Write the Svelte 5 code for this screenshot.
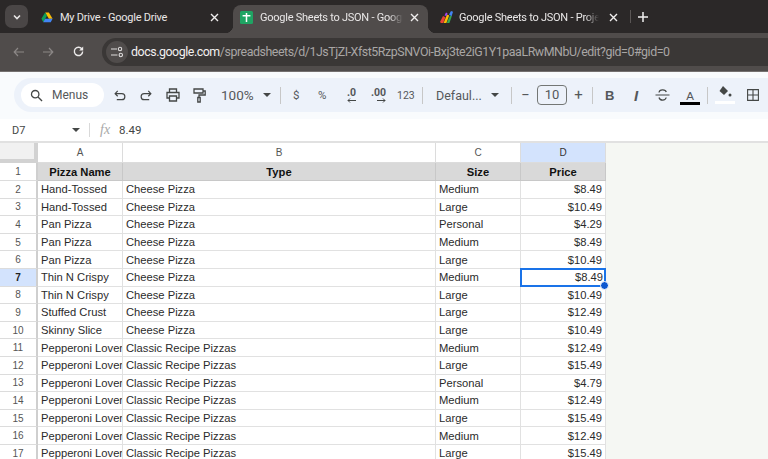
<script>
  const tabs = [
    { id: 'drive', title: 'My Drive - Google Drive' },
    { id: 'sheets', title: 'Google Sheets to JSON - Google Sheets', active: true },
    { id: 'script', title: 'Google Sheets to JSON - Project Editor' },
  ]

  const cheese = 'Cheese Pizza'
  const classic = 'Classic Recipe Pizzas'
  const pep = 'Pepperoni Lovers'
  const rows = [
    ['Hand-Tossed', cheese, 'Medium', '$8.49'],
    ['Hand-Tossed', cheese, 'Large', '$10.49'],
    ['Pan Pizza', cheese, 'Personal', '$4.29'],
    ['Pan Pizza', cheese, 'Medium', '$8.49'],
    ['Pan Pizza', cheese, 'Large', '$10.49'],
    ['Thin N Crispy', cheese, 'Medium', '$8.49'],
    ['Thin N Crispy', cheese, 'Large', '$10.49'],
    ['Stuffed Crust', cheese, 'Large', '$12.49'],
    ['Skinny Slice', cheese, 'Large', '$10.49'],
    [pep, classic, 'Medium', '$12.49'],
    [pep, classic, 'Large', '$15.49'],
    [pep, classic, 'Personal', '$4.79'],
    [pep, classic, 'Medium', '$12.49'],
    [pep, classic, 'Large', '$15.49'],
    [pep, classic, 'Medium', '$12.49'],
    [pep, classic, 'Large', '$15.49'],
  ]
</script>

<div class="page">
  <header class="tabstrip">
    <button class="tab-search" aria-label="Search tabs">
      <svg width="10" height="10" viewBox="0 0 10 10"><path d="M2 3.5 5 6.5 8 3.5" fill="none" stroke="#e8e6e6" stroke-width="1.6"/></svg>
    </button>
    {#each tabs as tab}
      <div class="tab {tab.id}" class:active={tab.active}>
        {#if tab.id === 'drive'}
          <svg class="fav" width="12" height="11" viewBox="0 0 14 13">
            <path d="M4.8.5h4.4l4.4 7.6H9.2z" fill="#fbbc04"/>
            <path d="M4.8.5 7 4.3 2.6 12 .4 8.1z" fill="#0f9d58"/>
            <path d="M4.8 8.1h8.8L11.4 12H2.6z" fill="#4285f4"/>
          </svg>
        {:else if tab.id === 'sheets'}
          <svg class="fav" width="13" height="13" viewBox="0 0 13 13">
            <rect width="13" height="13" rx="1.5" fill="#1fa463"/>
            <path d="M2.6 4.8h7.8M6.5 2v9" stroke="#fff" stroke-width="1.5" fill="none"/>
          </svg>
        {:else}
          <svg class="fav" width="14" height="14" viewBox="0 0 14 14">
            <path d="M0 12 3 6l2.4 1.2L3.2 13H1z" fill="#ea4335"/>
            <path d="M3.6 13 7 4.4l2.2 1L6.4 13z" fill="#fbbc04"/>
            <path d="M6.8 13 10 5.5l1.8.8L9.4 13z" fill="#34a853"/>
            <path d="M9 4.5 11 1l2 .8-1.4 4.4z" fill="#4285f4"/>
            <path d="M4.5 5.5 6 2.5l1.5.8-1 2.6z" fill="#a142f4"/>
          </svg>
        {/if}
        <span class="tab-title">{tab.title}</span>
        <svg class="tab-x" width="9" height="9" viewBox="0 0 9 9"><path d="M1 1l7 7M8 1 1 8" stroke="#f1efef" stroke-width="1.4"/></svg>
      </div>
    {/each}
    <span class="tab-sep"></span>
    <svg class="new-tab" width="10" height="10" viewBox="0 0 10 10"><path d="M5 0v10M0 5h10" stroke="#f1efef" stroke-width="1.5"/></svg>
  </header>

  <div class="addressbar">
    <svg width="11" height="10" viewBox="0 0 11 10" class="nav"><path d="M11 5H1.2M5 1 1.2 5 5 9" fill="none" stroke="#8b8786" stroke-width="1.2"/></svg>
    <svg width="11" height="10" viewBox="0 0 11 10" class="nav"><path d="M0 5h9.8M6 1l3.8 4L6 9" fill="none" stroke="#8b8786" stroke-width="1.2"/></svg>
    <svg width="11" height="11" viewBox="0 0 14 14" class="nav reload"><path d="M11.6 4.2A5.3 5.3 0 1 0 12.3 7" fill="none" stroke="#eceaea" stroke-width="1.8"/><path d="M13 .6v5.2H7.8z" fill="#eceaea"/></svg>
    <div class="omnibox">
      <span class="site-btn">
        <svg width="12" height="12" viewBox="0 0 12 12"><path d="M0 3h6M0 9h6.5" stroke="#dedcdc" stroke-width="1.1"/><circle cx="9" cy="3" r="1.7" fill="none" stroke="#dedcdc" stroke-width="1.1"/><circle cx="9.8" cy="9" r="1.7" fill="none" stroke="#dedcdc" stroke-width="1.1"/></svg>
      </span>
      <span class="url"><b>docs.google.com</b>/spreadsheets/d/1JsTjZI-Xfst5RzpSNVOi-Bxj3te2iG1Y1paaLRwMNbU/edit?gid=0#gid=0</span>
    </div>
  </div>

  <div class="toolbar-wrap">
    <div class="toolbar">
      <div class="menus">
        <svg width="13" height="13" viewBox="0 0 14 14"><circle cx="5.6" cy="5.6" r="4" fill="none" stroke="#444746" stroke-width="1.4"/><path d="M8.6 8.6 13 13" stroke="#444746" stroke-width="1.4"/></svg>
        <span>Menus</span>
      </div>
      <svg class="undo" width="12" height="11" viewBox="0 0 13 12"><path d="M1.5 4h7a3.2 3.2 0 0 1 0 6.6H3M4 1 1.2 4 4 6.8" fill="none" stroke="#444746" stroke-width="1.3"/></svg>
      <svg class="redo" width="12" height="11" viewBox="0 0 13 12"><path d="M11.5 4h-7a3.2 3.2 0 0 0 0 6.6H10M9 1l2.8 3L9 6.8" fill="none" stroke="#444746" stroke-width="1.3"/></svg>
      <svg class="print" width="14" height="14" viewBox="0 0 14 14"><path d="M3.5 4V1h7v3M3.5 10H1V4.5h12V10h-2.5M3.5 8h7v5h-7z" fill="none" stroke="#444746" stroke-width="1.3"/></svg>
      <svg class="paint" width="13" height="15" viewBox="0 0 13 15"><path d="M1 1h9v4H1zM10 3h2.2v4H6v2.5M4.8 9.5h2.4V14H4.8z" fill="none" stroke="#444746" stroke-width="1.3"/></svg>
      <span class="zoom">100%</span>
      <span class="caret c1"></span>
      <span class="sep s1"></span>
      <span class="dollar">$</span>
      <span class="pct">%</span>
      <span class="dec dec-down">.0<svg width="9" height="5" viewBox="0 0 9 5"><path d="M9 2.5H1M3 .5l-2 2 2 2" fill="none" stroke="#444746"/></svg></span>
      <span class="dec dec-up">.00<svg width="9" height="5" viewBox="0 0 9 5"><path d="M0 2.5h8M6 .5l2 2-2 2" fill="none" stroke="#444746"/></svg></span>
      <span class="n123">123</span>
      <span class="sep s2"></span>
      <span class="font">Defaul...</span>
      <span class="caret c2"></span>
      <span class="sep s3"></span>
      <span class="minus">−</span>
      <span class="fontsize">10</span>
      <span class="plus">+</span>
      <span class="sep s4"></span>
      <span class="fmt bold">B</span>
      <span class="fmt italic">I</span>
      <svg class="strike" width="15" height="14" viewBox="0 0 14 14"><path d="M0 7h14M3.5 4.5C4 1 10 1 10.8 4M3.5 9.5c.8 3.5 6.5 3.5 7.2 0" fill="none" stroke="#444746" stroke-width="1.2"/></svg>
      <div class="textcolor"><span>A</span><i></i></div>
      <span class="sep s5"></span>
      <div class="fillcolor">
        <svg width="14" height="12" viewBox="0 0 14 12"><path d="M5 0l5 5-4 4-4.5-4z" fill="#444746"/><circle cx="12" cy="9" r="1.5" fill="#444746"/></svg>
        <i></i>
      </div>
      <svg class="borders" width="12" height="12" viewBox="0 0 12 12"><path d="M.6.6h10.8v10.8H.6zM6 .6v10.8M.6 6h10.8" fill="none" stroke="#444746" stroke-width="1.1"/></svg>
    </div>
  </div>

  <div class="formula">
    <span class="namebox">D7</span>
    <span class="caret c3"></span>
    <span class="fsep"></span>
    <span class="fx">fx</span>
    <span class="fval">8.49</span>
  </div>

  <div class="sheet">
    <div class="grid">
      <div class="corner"></div>
      <div class="colh">A</div>
      <div class="colh">B</div>
      <div class="colh">C</div>
      <div class="colh sel">D</div>

      <div class="rowh">1</div>
      <div class="cell head">Pizza Name</div>
      <div class="cell head">Type</div>
      <div class="cell head">Size</div>
      <div class="cell head">Price</div>

      {#each rows as r, i}
        <div class="rowh" class:sel={i === 5}>{i + 2}</div>
        <div class="cell clip">{r[0]}</div>
        <div class="cell">{r[1]}</div>
        <div class="cell">{r[2]}</div>
        <div class="cell num" class:current={i === 5}>{r[3]}</div>
      {/each}
    </div>
  </div>
</div>

<style>
  :global(body) {
    margin: 0;
    overflow: hidden;
    background: #fff;
  }

  .page {
    width: 768px;
    height: 459px;
    overflow: hidden;
    font-family: "Roboto", "Liberation Sans", sans-serif;
    display: flex;
    flex-direction: column;
  }

  /* browser chrome */
  .tabstrip {
    height: 33px;
    flex: none;
    background: #2b2828;
    display: flex;
    align-items: flex-end;
    color: #e9e7e7;
    font-size: 11px;
    letter-spacing: -0.25px;
  }

  .tab-search {
    width: 23px;
    height: 23px;
    margin: 0 0 5px 5px;
    padding: 0;
    border: 0;
    border-radius: 7px;
    background: #4a4646;
    display: flex;
    align-items: center;
    justify-content: center;
  }

  .tab {
    height: 28px;
    display: flex;
    align-items: center;
    box-sizing: border-box;
    padding-bottom: 4px;
    border-radius: 8px 8px 0 0;
    position: relative;
    flex: none;
  }

  .fav { flex: none; }

  .drive { width: 205px; padding-left: 13px; }
  .sheets { width: 195px; padding-left: 7px; background: #504c4b; }
  .script { width: 200px; padding-left: 12px; }

  /* concave corners at the foot of the active tab */
  .active::before, .active::after {
    content: "";
    position: absolute;
    bottom: 0;
    width: 8px;
    height: 8px;
  }

  .active::before {
    left: -8px;
    background: radial-gradient(circle at 0 0, transparent 8px, #504c4b 8.5px);
  }

  .active::after {
    right: -8px;
    background: radial-gradient(circle at 100% 0, transparent 8px, #504c4b 8.5px);
  }

  .tab-title {
    margin-left: 7px;
    white-space: nowrap;
    overflow: hidden;
    flex: none;
    mask-image: linear-gradient(to left, transparent, #000 14px);
  }

  .drive .tab-title { width: 135px; margin-left: 7px; mask-image: none; }
  .sheets .tab-title { width: 143px; }
  .script .tab-title { width: 140px; margin-left: 5px; }

  .tab-x { flex: none; }
  .drive .tab-x { margin-left: 15px; }
  .sheets .tab-x { margin-left: 7px; }
  .script .tab-x { margin-left: 10px; }

  .tab-sep {
    width: 1px;
    height: 13px;
    background: #5a5655;
    margin: 0 0 10px 2px;
    flex: none;
  }

  .new-tab {
    margin: 0 0 11px 7px;
    flex: none;
  }

  .addressbar {
    height: 39px;
    flex: none;
    box-sizing: border-box;
    background: #504c4b;
    border-bottom: 1px solid #757170;
    display: flex;
    align-items: center;
    padding: 0 0 1px 13px;
  }

  .nav {
    margin-right: 19px;
    flex: none;
  }

  .nav.reload { margin-right: 18px; }

  .omnibox {
    flex: 1;
    height: 28px;
    border-radius: 14px 0 0 14px;
    background: #3a3736;
    display: flex;
    align-items: center;
    padding-left: 4px;
    min-width: 0;
  }

  .site-btn {
    width: 22px;
    height: 22px;
    border-radius: 50%;
    background: #504c4b;
    display: flex;
    align-items: center;
    justify-content: center;
    flex: none;
  }

  .url {
    margin-left: 3px;
    font-size: 12.4px;
    letter-spacing: -0.45px;
    white-space: nowrap;
    color: #a9a6a5;
  }

  .url b {
    font-weight: 400;
    color: #f2f0f0;
  }

  /* sheets toolbar */
  .toolbar-wrap {
    height: 47px;
    flex: none;
    padding: 6px 0 0 14px;
    box-sizing: border-box;
    background: #f9fbfd;
  }

  .toolbar {
    height: 34px;
    box-sizing: border-box;
    padding-left: 7px;
    background: #edf2fa;
    border-radius: 17px 0 0 17px;
    display: flex;
    align-items: center;
    color: #55585a;
    font-size: 13px;
    white-space: nowrap;
  }

  .toolbar > * { flex: none; }

  .menus {
    width: 83px;
    height: 24px;
    box-sizing: border-box;
    background: #fff;
    border-radius: 12px;
    display: flex;
    align-items: center;
    padding-left: 9px;
    gap: 9px;
    font-size: 12px;
  }

  .undo { margin-left: 10px; }
  .redo { margin-left: 14px; }
  .print { margin-left: 14px; }
  .paint { margin-left: 13px; }
  .zoom { margin-left: 15px; width: 31px; font-size: 13.5px; }
  .c1 { margin-left: 11px; }
  .s1 { margin-left: 9px; }
  .dollar { margin-left: 12px; width: 8px; font-size: 11.5px; }
  .pct { margin-left: 17px; width: 11px; font-size: 11.5px; }
  .dec-down { margin-left: 14px; width: 13px; }
  .dec-up { margin-left: 14px; width: 16px; }
  .n123 { margin-left: 11px; width: 17px; font-size: 10.5px; }
  .s2 { margin-left: 8px; }
  .font { margin-left: 13px; width: 45px; font-size: 12.5px; }
  .c2 { margin-left: 10px; }
  .s3 { margin-left: 12px; }
  .minus { margin-left: 9px; width: 9px; font-size: 15px; text-align: center; }
  .plus { margin-left: 7px; width: 9px; font-size: 15px; text-align: center; }
  .s4 { margin-left: 9px; }
  .bold { margin-left: 12px; width: 8px; font-weight: 700; }
  .italic {
    margin-left: 19px;
    width: 8px;
    font: italic 700 15px "Liberation Serif", serif;
    text-align: center;
  }
  .strike { margin-left: 15px; }
  .s5 { margin-left: 7px; }
  .borders { margin-left: 12px; }

  .caret {
    width: 0;
    height: 0;
    border-left: 4px solid transparent;
    border-right: 4px solid transparent;
    border-top: 4px solid #444746;
  }

  .sep {
    width: 1px;
    height: 17px;
    background: #c7c7c7;
  }

  .dec {
    font-size: 10.5px;
    font-weight: 700;
    line-height: 11px;
    display: flex;
    flex-direction: column;
    align-items: flex-end;
  }

  .fontsize {
    margin-left: 7px;
    width: 30px;
    height: 20px;
    line-height: 18px;
    box-sizing: border-box;
    text-align: center;
    border: 1px solid #747775;
    border-radius: 4px;
  }

  .fmt { font-family: "Liberation Sans", sans-serif; }

  .textcolor {
    margin-left: 10px;
    width: 20px;
    text-align: center;
    font-size: 11.5px;
    line-height: 12px;
    padding-top: 4px;
    font-family: "Liberation Sans", sans-serif;
  }

  .textcolor span { display: block; }

  .textcolor i {
    display: block;
    height: 3px;
    background: #000;
  }

  .fillcolor {
    margin-left: 7px;
    width: 20px;
  }

  .fillcolor svg { display: block; margin: 0 auto 3px; }

  .fillcolor i {
    display: block;
    height: 3px;
    background: #fff;
  }

  /* formula bar */
  .formula {
    height: 24px;
    flex: none;
    box-sizing: border-box;
    background: #fff;
    border-bottom: 2px solid #e1e1e1;
    display: flex;
    align-items: center;
    font-size: 11px;
    color: #444746;
  }

  .namebox { margin-left: 12px; width: 60px; }
  .c3 { margin-right: 9px; }
  .fsep { width: 1px; height: 14px; background: #d9d9d9; }

  .fx {
    margin-left: 10px;
    font: italic 14px "Liberation Serif", serif;
    color: #a8a8a8;
    width: 19px;
  }

  .fval { font-size: 11.5px; }

  /* grid */
  .sheet {
    flex: 1;
    min-height: 0;
    background: #f5f7f3;
  }

  .grid {
    display: grid;
    grid-template-columns: 38px 85px 313px 85px 85px;
    grid-template-rows: 20px 18px;
    grid-auto-rows: 17.6px;
    width: 606px;
    background: #fff;
    font-family: "Liberation Sans", Arial, sans-serif;
    font-size: 11.2px;
    color: #2b2b2b;
  }

  .corner {
    background: #f1f1f1;
    border-right: 4px solid #d2d2d2;
    border-bottom: 4px solid #d2d2d2;
    box-sizing: border-box;
  }

  .colh, .rowh {
    box-sizing: border-box;
    display: flex;
    align-items: center;
    justify-content: center;
    font-size: 10px;
    color: #555;
    background: #fff;
    border-right: 1px solid #dcdcdc;
    border-bottom: 1px solid #dcdcdc;
  }

  .rowh { border-right-width: 2px; border-right-color: #cfcfcf; }

  .colh.sel { background: #d3e3fd; color: #333; }
  .rowh.sel { background: #d3e3fd; color: #222; font-weight: 700; }

  .cell {
    box-sizing: border-box;
    padding: 0 3px;
    display: flex;
    align-items: center;
    border-right: 1px solid #e1e1e1;
    border-bottom: 1px solid #e1e1e1;
    white-space: nowrap;
    overflow: hidden;
  }

  .clip { padding-right: 0; }

  .head {
    background: #d9d9d9;
    justify-content: center;
    font-weight: 700;
    color: #111;
    border-color: #c8c8c8;
  }

  .num { justify-content: flex-end; }

  .current {
    overflow: visible;
    position: relative;
    border: 2px solid #1a73e8;
    margin: -1px 0 0 -1px;
    padding-right: 1px;
    z-index: 1;
  }

  .current::after {
    content: "";
    position: absolute;
    right: -5px;
    bottom: -5px;
    width: 7px;
    height: 7px;
    border-radius: 50%;
    background: #0b57d0;
    border: 1px solid #fff;
  }
</style>
